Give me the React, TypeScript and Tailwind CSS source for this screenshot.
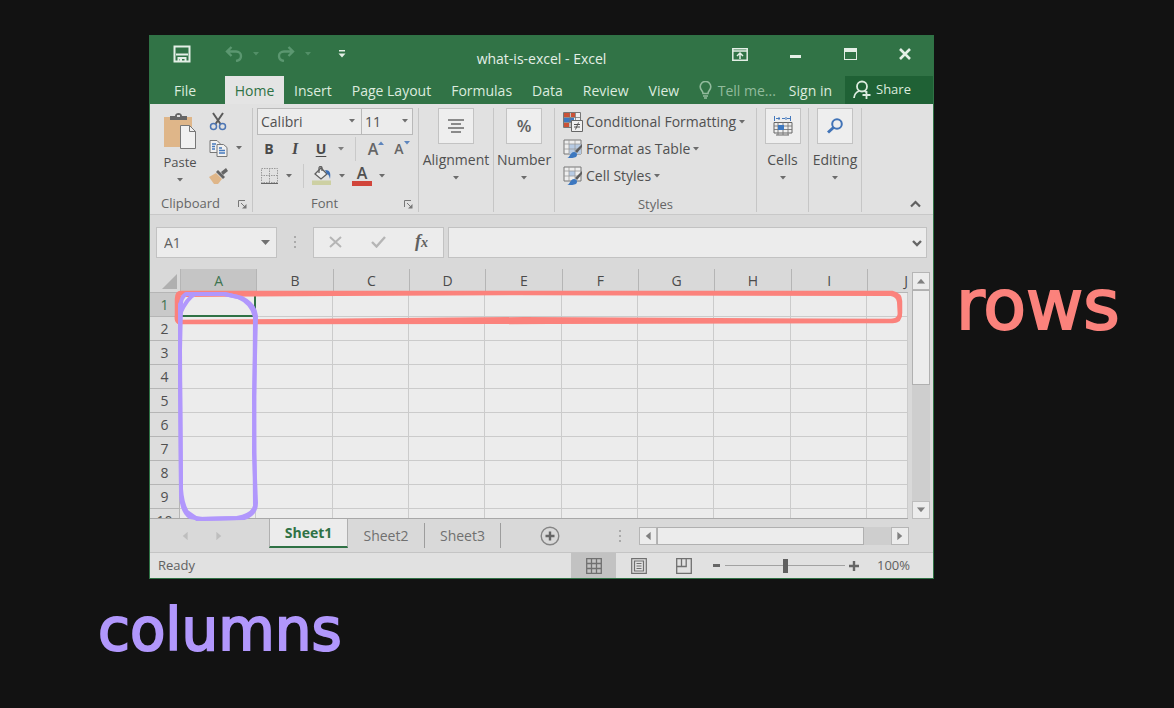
import type { ReactNode } from "react";

const tabs = ["Insert", "Page Layout", "Formulas", "Data", "Review", "View"];
const columns = ["A", "B", "C", "D", "E", "F", "G", "H", "I", "J"];
const rows = [1, 2, 3, 4, 5, 6, 7, 8, 9, 10];

function Caret({ className = "" }: { className?: string }) {
  return (
    <svg className={"shrink-0 opacity-80 " + className} width="6" height="4" viewBox="0 0 6 4" fill="currentColor" aria-hidden="true">
      <path d="M0 0h6L3 3.6z" />
    </svg>
  );
}

function IconButton({ label, className = "", children }: { label: string; className?: string; children: ReactNode }) {
  return (
    <button type="button" aria-label={label} className={"flex shrink-0 items-center justify-center " + className}>
      {children}
    </button>
  );
}

function Launcher({ label }: { label: string }) {
  return (
    <IconButton label={label} className="h-4 w-3 text-[#777]">
      <svg width="9" height="9" viewBox="0 0 9 9" fill="none" stroke="currentColor">
        <path d="M.5 7V.5H7M3 3l4.5 4.5" />
        <path d="M8.5 4v4.5H4z" fill="currentColor" stroke="none" />
      </svg>
    </IconButton>
  );
}

function TitleBar() {
  return (
    <div className="grid h-10 grid-cols-[1fr_auto_1fr] items-center text-[#e4efe6]">
      <div className="flex items-center pb-1 pl-5">
        <IconButton label="Save" className="h-6 w-6">
          <svg width="18" height="18" viewBox="0 0 18 18" fill="none" stroke="currentColor" strokeWidth="2">
            <path d="M1.500 1.500h15v15h-15zM3 9.500h12" />
            <path d="M5.500 17v-4h7v4" />
            <path d="M8 14v3" />
          </svg>
        </IconButton>
        <IconButton label="Undo" className="ml-7 h-6 w-6 text-[#5b9770]">
          <svg width="18" height="16" viewBox="0 0 18 16" fill="none" stroke="currentColor" strokeWidth="2.400">
            <path d="M6.500 1 2 5.500l4.500 4.500M2.500 5.500H11c3 0 5 2 5 4.500s-2 4.500-5 5" />
          </svg>
        </IconButton>
        <IconButton label="Undo options" className="ml-1 h-6 w-3 text-[#5b9770]">
          <Caret />
        </IconButton>
        <IconButton label="Redo" className="ml-3 h-6 w-6 text-[#5b9770]">
          <svg width="18" height="16" viewBox="0 0 18 16" fill="none" stroke="currentColor" strokeWidth="2.400">
            <path d="M11.500 1 16 5.500 11.500 10M15.500 5.500H7c-3 0-5 2-5 4.500s2 4.500 5 5" />
          </svg>
        </IconButton>
        <IconButton label="Redo options" className="ml-1 h-6 w-3 text-[#5b9770]">
          <Caret />
        </IconButton>
        <IconButton label="Customize toolbar" className="ml-5 h-6 w-4">
          <svg width="8" height="8" viewBox="0 0 8 8" fill="currentColor">
            <path d="M1 0h6v1.500H1zM.5 3.500h7L4 7.500z" />
          </svg>
        </IconButton>
      </div>
      <h1 className="pt-1 text-[14px]">what-is-excel - Excel</h1>
      <div className="flex items-center justify-end gap-[31px] pr-4 pb-1">
        <IconButton label="Ribbon display options" className="h-6 w-6">
          <svg width="16" height="13" viewBox="0 0 16 13" fill="none" stroke="currentColor" strokeWidth="1.500">
            <path d="M.8.8h14.400v11.400H.8zM1 3h14M8 11V5.500M5 8l3-3 3 3" />
          </svg>
        </IconButton>
        <IconButton label="Minimize" className="h-6 w-6">
          <span className="mt-1 h-[3px] w-[11px] bg-current" />
        </IconButton>
        <IconButton label="Maximize" className="h-6 w-6">
          <span className="h-3 w-[13px] border border-t-4 border-current" />
        </IconButton>
        <IconButton label="Close" className="h-6 w-6">
          <svg width="12" height="12" viewBox="0 0 12 12" stroke="currentColor" strokeWidth="2.600">
            <path d="m1 1 10 10M11 1 1 11" />
          </svg>
        </IconButton>
      </div>
    </div>
  );
}

function MenuTabs() {
  return (
    <nav className="flex h-7 text-[14px] text-[#dcebdf]">
      <button type="button" className="ml-[11px] w-12">File</button>
      <button type="button" className="ml-4 w-[59px] bg-[#e4e4e4] text-[#2f7245]">Home</button>
      {tabs.map((tab) => (
        <button key={tab} type="button" className="px-2.5 whitespace-nowrap">
          {tab}
        </button>
      ))}
      <button type="button" className="ml-auto flex items-center gap-1.5 whitespace-nowrap text-[#92bb9d]">
        <svg width="13" height="18" viewBox="0 0 13 18" fill="none" stroke="currentColor" strokeWidth="1.600">
          <path d="M4 12.500C4 10 1.200 9 1.200 5.800a5.300 5.300 0 0 1 10.600 0C11.800 9 9 10 9 12.500zM4 15h5M5 17h3" />
        </svg>
        Tell me...
      </button>
      <button type="button" className="px-[13px] whitespace-nowrap">Sign in</button>
      <button type="button" className="flex w-[88px] items-center gap-1 bg-[#1f6135] pl-2 text-[13px] font-medium">
        <svg width="19" height="20" viewBox="0 0 19 20" fill="none" stroke="currentColor" strokeWidth="1.800">
          <circle cx="9" cy="6.500" r="5" />
          <path d="M1 18c.4-4 2.500-6 5-7M11.500 11l1.500 1M13.500 11v8M9.500 15h8" />
        </svg>
        Share
      </button>
    </nav>
  );
}

function ClipboardGroup() {
  return (
    <section className="mt-1 mb-0.5 flex w-[103px] shrink-0 flex-col border-r border-[#c6c6c6]">
      <div className="flex flex-1">
        <button type="button" className="ml-2.5 flex w-10 flex-col items-center">
          <svg className="mt-1" width="36" height="38" viewBox="0 0 36 38">
            <path d="M2 5h28v30H2z" fill="#dfb689" />
            <path d="M8 8V4h5c0-4 7-4 7 0h5v4z" fill="#666" />
            <path d="M15 3h3v2h-3z" fill="#ddd" />
            <path d="M18.500 13.500h9l6 6v17h-15z" fill="#f1f1f1" stroke="#777" />
            <path d="M27.500 13.500v6h6" fill="none" stroke="#777" />
          </svg>
          <span className="mt-0.5 text-[13px] leading-5">Paste</span>
          <Caret className="mt-1.5" />
        </button>
        <div className="flex flex-col">
          <IconButton label="Cut" className="h-[26px] w-9">
            <svg width="18" height="19" viewBox="0 0 18 19" fill="none" strokeWidth="2">
              <path d="m4 1 7.500 11M14 1 6.500 12" stroke="#5a5a5a" />
              <circle cx="4.500" cy="14.500" r="3" stroke="#4d76b4" strokeWidth="1.500" />
              <circle cx="13.500" cy="14.500" r="3" stroke="#4d76b4" strokeWidth="1.500" />
            </svg>
          </IconButton>
          <div className="flex">
            <IconButton label="Copy" className="h-7 w-9">
              <svg width="19" height="17" viewBox="0 0 19 17" fill="#f1f1f1" stroke="#777">
                <path d="M1 .5h7l3 3v9H1z" />
                <path d="M8 4.500h6.500l3.500 3v9H8z" />
                <path d="M3 4h4M3 6.500h3M3 9h3M10 8h3M10 10.500h6M10 13h6" stroke="#4579bd" strokeWidth="1.300" />
              </svg>
            </IconButton>
            <IconButton label="Copy options" className="h-7 w-1.5">
              <Caret />
            </IconButton>
          </div>
          <IconButton label="Format painter" className="h-7 w-9">
            <svg width="19" height="17" viewBox="0 0 19 17">
              <path d="M0 9 7 5l6 6-4 5H5z" fill="#dfb689" />
              <path d="m7 4 2-2 7 7-2 2z" fill="#656565" />
              <path d="m12 4 5-4 2 3-5 4z" fill="#656565" />
            </svg>
          </IconButton>
        </div>
      </div>
      <div className="flex h-4 items-center justify-between pr-1 pl-[11px] text-[13px] text-[#666]">
        Clipboard
        <Launcher label="Clipboard settings" />
      </div>
    </section>
  );
}

function FontGroup() {
  return (
    <section className="mt-1 mb-0.5 flex w-[166px] shrink-0 flex-col border-r border-[#c6c6c6] pl-1">
      <div className="flex h-[27px] w-[156px] border border-[#b9b9b9] bg-[#ececec]">
        <label className="relative w-[104px] border-r border-[#b9b9b9]">
          <select aria-label="Font name" className="h-full w-full appearance-none pl-[3px] outline-none">
            <option>Calibri</option>
          </select>
          <Caret className="pointer-events-none absolute top-2.5 right-1.5" />
        </label>
        <label className="relative flex-1">
          <select aria-label="Font size" className="h-full w-full appearance-none pl-[3px] outline-none">
            <option>11</option>
          </select>
          <Caret className="pointer-events-none absolute top-2.5 right-1" />
        </label>
      </div>
      <div className="flex h-[27px] items-center font-bold text-[#4a4a4a]">
        <button type="button" className="w-6">B</button>
        <button type="button" className="w-7 font-['Liberation_Serif'] text-[16px] italic">I</button>
        <button type="button" className="w-6 underline underline-offset-2">U</button>
        <IconButton label="Underline options" className="h-6 w-4 text-[#666]"><Caret /></IconButton>
        <span className="ml-1.5 h-6 w-px bg-[#c9c9c9]" />
        <IconButton label="Increase font size" className="ml-1.5 h-6 w-7 text-[16px] font-semibold text-[#666]">
          A
          <Caret className="mb-3 rotate-180 text-[#3d6fb5]" />
        </IconButton>
        <IconButton label="Decrease font size" className="h-6 w-6 font-semibold text-[#666]">
          A
          <Caret className="mb-3 text-[#3d6fb5]" />
        </IconButton>
      </div>
      <div className="flex h-[27px] items-center">
        <IconButton label="Borders" className="h-6 w-6">
          <svg width="17" height="16" viewBox="0 0 17 16" fill="none" stroke="#999">
            <path d="M.5.5h16v14H.5zM8.500 0v15M0 7.500h17" strokeDasharray="1.500 1" />
            <path d="M0 15.500h17" stroke="#666" />
          </svg>
        </IconButton>
        <IconButton label="Border options" className="h-6 w-4"><Caret /></IconButton>
        <span className="mx-1.5 h-6 w-px bg-[#c9c9c9]" />
        <IconButton label="Fill color" className="h-6 w-6">
          <svg width="20" height="19" viewBox="0 0 20 19">
            <path d="M0 14.500h19V19H0z" fill="#cdd0a3" />
            <path d="m3 8 6-6 6 6-6 5z" fill="#eee" stroke="#606060" strokeWidth="1.300" />
            <path d="M7 7V2c0-2 3-2 3 0v3" fill="none" stroke="#606060" strokeWidth="1.300" />
            <path d="M13 4c5 0 6 3 5 9-1-4-2-5-3-5z" fill="#3d6fb5" />
          </svg>
        </IconButton>
        <IconButton label="Fill color options" className="h-6 w-4"><Caret /></IconButton>
        <IconButton label="Font color" className="h-6 w-6">
          <span className="w-5 border-b-5 border-[#d1453b] text-center text-[16px] leading-[15px] font-semibold">A</span>
        </IconButton>
        <IconButton label="Font color options" className="h-6 w-4"><Caret /></IconButton>
      </div>
      <div className="mt-auto flex h-4 items-center justify-between pr-1 text-[13px] text-[#666]">
        <span className="flex-1 pr-2.5 text-center">Font</span>
        <Launcher label="Font settings" />
      </div>
    </section>
  );
}

function LargeGroup({ label, className, children }: { label: string; className: string; children: ReactNode }) {
  return (
    <section className={"mt-1 mb-0.5 shrink-0 border-r border-[#c6c6c6] " + className}>
      <button type="button" className="flex w-full flex-col items-center">
        <span className="flex h-9 w-9 items-center justify-center border border-[#c3c3c3] bg-[#eeeeee]">{children}</span>
        <span className="mt-1.5 leading-5">{label}</span>
        <Caret className="mt-1.5" />
      </button>
    </section>
  );
}

function TableBrush({ filled }: { filled: string }) {
  return (
    <svg width="20" height="20" viewBox="0 0 20 20" fill="none">
      <path d="M1 1h17v14H1z" fill="#eee" stroke="#777" />
      <path d={filled} fill="#b7cbe4" />
      <path d="M1 5h17M1 10h17M6 1v14M12 1v14" stroke="#999" strokeWidth=".8" />
      <path d="m19 5-7 7 2 2 5-6z" fill="#5e5e5e" />
      <path d="M4 19c3 0 3-6 7-6 3 0 4 3 2 5-2 1-5 1-9 1z" fill="#3d78c0" />
    </svg>
  );
}

function StylesGroup() {
  return (
    <section className="mt-1 mb-0.5 flex w-[202px] shrink-0 flex-col border-r border-[#c6c6c6] pl-2">
      <button type="button" className="flex h-[27px] items-center gap-[3px] whitespace-nowrap">
        <svg width="20" height="20" viewBox="0 0 20 20">
          <path d="M.5.5h17v15H.5z" fill="#eee" stroke="#777" />
          <path d="M1 1h6v4H1zM8 1h4v4H8zM1 11h5v4H1z" fill="#ca5237" />
          <path d="M1 6h10v4H1z" fill="#3d78c0" />
          <path d="M1 5.500h17M1 10.500h17M7 1v15M12.500 1v8" stroke="#777" fill="none" strokeWidth=".8" />
          <path d="M8.500 8.500h11v11h-11z" fill="#f0f0f0" stroke="#666" />
          <path d="M11 12.500h6M11 15h6M15.500 10.500l-3 7" stroke="#555" fill="none" />
        </svg>
        Conditional Formatting
        <Caret />
      </button>
      <button type="button" className="flex h-[27px] items-center gap-[3px] whitespace-nowrap">
        <TableBrush filled="M6 5h12v10H6z" />
        Format as Table
        <Caret />
      </button>
      <button type="button" className="flex h-[27px] items-center gap-[3px] whitespace-nowrap">
        <TableBrush filled="M6 5h6v5H6z" />
        Cell Styles
        <Caret />
      </button>
      <div className="mt-auto h-4 pr-2 text-center text-[13px] leading-4 text-[#666]">Styles</div>
    </section>
  );
}

function Ribbon() {
  return (
    <div className="flex h-[111px] border-b border-[#c8c8c8] bg-[#e1e1e1] text-[14px] text-[#505050]">
      <ClipboardGroup />
      <FontGroup />
      <LargeGroup label="Alignment" className="w-[75px]">
        <svg width="18" height="14" viewBox="0 0 18 14" stroke="#6a6a6a" strokeWidth="1.500">
          <path d="M1 1h16M4 5h10M1 9h16M4 13h10" />
        </svg>
      </LargeGroup>
      <LargeGroup label="Number" className="w-[61px]">
        <span className="text-[17px] font-semibold text-[#606060]">%</span>
      </LargeGroup>
      <StylesGroup />
      <LargeGroup label="Cells" className="w-[52px]">
        <svg width="20" height="21" viewBox="0 0 20 21" fill="none">
          <path d="M1.500 0v5M17.500 0v5M3 2.500h4M9 2.500h3M14 2.500h3M6 1v3M13 1v3" stroke="#4579bd" />
          <path d="M1 6.500h18v10.500H1zM3 19h13" fill="#eee" stroke="#666" />
          <path d="M1 10h18M1 13.500h18M5 6v13M10 6v13M15 6v13" stroke="#777" strokeWidth=".9" />
          <path d="M5 9h6v5H5z" fill="#3d78c0" />
        </svg>
      </LargeGroup>
      <LargeGroup label="Editing" className="w-[53px]">
        <svg width="18" height="16" viewBox="0 0 18 16" fill="none" stroke="#4173b7" strokeWidth="2">
          <circle cx="11" cy="6" r="4.800" />
          <path d="M7.500 9.500 2 14.500" strokeWidth="3" />
        </svg>
      </LargeGroup>
      <div className="flex flex-1 items-end justify-end pr-2.5">
        <IconButton label="Collapse ribbon" className="h-5 w-4">
          <svg width="11" height="8" viewBox="0 0 11 8" fill="none" stroke="#606060" strokeWidth="2.200">
            <path d="m1 6.500 4.500-4.500L10 6.500" />
          </svg>
        </IconButton>
      </div>
    </div>
  );
}

function MoreDots() {
  return (
    <span className="flex flex-col gap-[3px]">
      <i className="size-0.5 bg-[#aaa]" />
      <i className="size-0.5 bg-[#aaa]" />
      <i className="size-0.5 bg-[#aaa]" />
    </span>
  );
}

function FormulaBar() {
  return (
    <div className="flex h-[54px] items-center px-1.5 text-[14px] text-[#606060]">
      <label className="relative h-[31px] w-[121px] shrink-0 border border-[#c2c2c2] bg-[#ececec]">
        <input aria-label="Name box" defaultValue="A1" className="h-full w-full bg-transparent px-[7px] outline-none" />
        <svg className="absolute top-3 right-1.5" width="9" height="5" viewBox="0 0 9 5" fill="#707070">
          <path d="M0 0h9L4.500 5z" />
        </svg>
      </label>
      <span className="flex w-9 shrink-0 justify-center">
        <MoreDots />
      </span>
      <div className="flex h-[31px] w-[131px] shrink-0 items-center justify-around border border-[#c2c2c2] bg-[#ececec]">
        <IconButton label="Cancel" className="h-6 w-8">
          <svg width="13" height="12" viewBox="0 0 13 12" stroke="#b5b5b5" strokeWidth="2">
            <path d="m1 1 11 10M12 1 1 11" />
          </svg>
        </IconButton>
        <IconButton label="Enter" className="h-6 w-8">
          <svg width="15" height="12" viewBox="0 0 15 12" fill="none" stroke="#b5b5b5" strokeWidth="2.400">
            <path d="m1 6 4.500 4.500L14 1" />
          </svg>
        </IconButton>
        <button type="button" aria-label="Insert function" className="w-8 font-['Liberation_Serif'] text-[18px] leading-5 font-bold italic">
          f<span className="text-[14px]">x</span>
        </button>
      </div>
      <label className="relative ml-1 h-[31px] flex-1 border border-[#c2c2c2] bg-[#ececec]">
        <input aria-label="Formula" className="h-full w-full bg-transparent px-2 outline-none" />
        <svg className="absolute top-3 right-1" width="10" height="7" viewBox="0 0 10 7" fill="none" stroke="#666" strokeWidth="2.400">
          <path d="m1 1 4 4 4-4" />
        </svg>
      </label>
    </div>
  );
}

function Grid() {
  return (
    <div className="min-w-0 flex-1 overflow-hidden border-b border-[#a8a8a8]">
      <table className="w-full table-fixed border-separate border-spacing-0 text-[14px] leading-5">
        <colgroup>
          <col className="w-[30px]" />
          {columns.map((column) => (
            <col key={column} className={column === "J" ? "w-[41px]" : ""} />
          ))}
        </colgroup>
        <thead>
          <tr className="h-6 text-[#4b4b4b]">
            <th className="border-b border-[#b5b5b5] p-0">
              <svg className="mt-0.5 ml-3" width="15" height="15" viewBox="0 0 15 15" fill="#b0b0b0">
                <path d="M15 0v15H0z" />
              </svg>
            </th>
            {columns.map((column) => (
              <th
                key={column}
                scope="col"
                className={
                  "border-b border-l border-[#b5b5b5] p-0 font-medium " +
                  (column === "A" ? "bg-[#c5c5c5] text-[#3e7450]" : column === "J" ? "text-right" : "")
                }
              >
                {column}
              </th>
            ))}
          </tr>
        </thead>
        <tbody>
          {rows.map((row) => (
            <tr key={row} className="h-6">
              <th
                scope="row"
                className={
                  "border-r border-b border-[#b5b5b5] p-0 font-medium " +
                  (row === 1 ? "bg-[#c9c9c9] text-[#3e7450]" : "bg-[#dddddd] text-[#505050]")
                }
              >
                {row}
              </th>
              {columns.map((column) => (
                <td
                  key={column}
                  className={
                    row === 1 && column === "A"
                      ? "border-r-2 border-b-2 border-[#2f7245] bg-[#ececec]"
                      : "border-r border-b border-[#cbcbcb] bg-[#ececec]"
                  }
                />
              ))}
            </tr>
          ))}
        </tbody>
      </table>
    </div>
  );
}

function VerticalScroll() {
  return (
    <div className="mr-[3px] ml-1 mt-[3px] flex w-[18px] flex-col bg-[#cecece] text-[#666]">
      <IconButton label="Scroll up" className="h-[18px] border border-[#b5b5b5] bg-[#ececec]">
        <Caret className="rotate-180 scale-140" />
      </IconButton>
      <div className="h-[95px] border border-[#b0b0b0] bg-[#ececec]" />
      <IconButton label="Scroll down" className="mt-auto h-[18px] border border-[#bdbdbd] bg-[#ececec]">
        <Caret className="scale-140" />
      </IconButton>
    </div>
  );
}

// Hand-drawn outlines laid over the first row and the first column.
function Outlines() {
  return (
    <>
      <svg
        className="pointer-events-none absolute top-5 left-[23px] h-9 w-[calc(100%-52px)]"
        viewBox="0 0 729 36"
        preserveAspectRatio="none"
        fill="none"
        stroke="#fb827c"
        strokeLinecap="round"
        strokeLinejoin="round"
      >
        <path d="M7 4C180 3 430 5 717 4q8 2 8 8v12q0 8-7 8C500 33 220 33 7 33q-4 0-3-7V10q0-6 4-6" strokeWidth="4.500" />
        <path d="M10 6 340 4 716 5q7 1 8 8l1 13q-2 6-9 6L350 30 6 33Q5 20 6 7" strokeWidth="4" />
      </svg>
      <svg
        className="pointer-events-none absolute top-[21px] left-[27px]"
        width="83"
        height="234"
        viewBox="0 0 83 234"
        fill="none"
        stroke="#b197fc"
        strokeLinecap="round"
        strokeLinejoin="round"
      >
        <path d="M9 4Q3 8 4 18L3 60l1 145q1 17 9 22l12 2 42-1q12-4 12-15l-2-50 1-136q-3-14-17-20L47 4z" strokeWidth="4" />
        <path d="M3 24Q10 8 18 4h30l17 4q13 7 14 18l-2 80 1 110q-2 9-18 12l-40 1-10-7Q5 214 4 199L3 90V14" strokeWidth="4" />
      </svg>
    </>
  );
}

function SheetBar() {
  return (
    <div className="flex h-[33px] text-[14px] text-[#707070]">
      <div className="flex w-[119px] shrink-0 items-center pl-[31px] text-[#b8b8b8]">
        <IconButton label="Previous sheet" className="h-6 w-2"><Caret className="rotate-90 scale-140" /></IconButton>
        <IconButton label="Next sheet" className="ml-[26px] h-6 w-2"><Caret className="-rotate-90 scale-140" /></IconButton>
      </div>
      <button type="button" className="mb-1 w-[79px] border-x border-b-2 border-x-[#b0b0b0] border-b-[#2f7245] bg-[#ececec] font-bold text-[#2f7245]">
        Sheet1
      </button>
      <button type="button" className="my-1 w-[77px] border-r border-[#9d9d9d]">Sheet2</button>
      <button type="button" className="my-1 w-[76px] border-r border-[#9d9d9d]">Sheet3</button>
      <IconButton label="New sheet" className="ml-[37px] w-6">
        <svg width="20" height="20" viewBox="0 0 20 20" fill="none" stroke="#858585" strokeWidth="1.400">
          <circle cx="10" cy="10" r="8.800" />
          <path d="M10 5.500v9M5.500 10h9" stroke="#666" strokeWidth="2.400" />
        </svg>
      </IconButton>
      <div className="ml-auto flex items-center pr-6">
        <MoreDots />
        <div className="ml-[18px] flex h-[18px] w-[270px] bg-[#cecece] text-[#666]">
          <IconButton label="Scroll left" className="w-[18px] border border-[#b5b5b5] bg-[#ececec]">
            <Caret className="rotate-90 scale-140" />
          </IconButton>
          <div className="flex-1 border border-[#b0b0b0] bg-[#ececec]" />
          <IconButton label="Scroll right" className="ml-[27px] w-[18px] border border-[#b5b5b5] bg-[#ececec]">
            <Caret className="-rotate-90 scale-140" />
          </IconButton>
        </div>
      </div>
    </div>
  );
}

function StatusBar() {
  return (
    <div className="flex h-[26px] items-center border-t border-[#c4c4c4] bg-[#e1e1e1] text-[13px] text-[#606060]">
      <span className="pl-2">Ready</span>
      <div className="ml-auto flex h-full">
        <IconButton label="Normal view" className="w-[45px] bg-[#c2c2c2]">
          <svg width="16" height="16" viewBox="0 0 16 16" fill="none" stroke="#707070" strokeWidth="1.300">
            <path d="M.7.700h14.600v14.600H.7zM5.500.7v14.600M10.500.7v14.600M.7 5.500h14.600M.7 10.500h14.600" />
          </svg>
        </IconButton>
        <IconButton label="Page layout view" className="w-[45px]">
          <svg width="16" height="16" viewBox="0 0 16 16" fill="none" stroke="#707070" strokeWidth="1.200">
            <path d="M.7.700h14.600v14.600H.7zM3.500 3h9v10h-9zM5.500 5.500h5M5.500 8h5M5.500 10.500h5" />
          </svg>
        </IconButton>
        <IconButton label="Page break preview" className="w-[45px]">
          <svg width="16" height="16" viewBox="0 0 16 16" fill="none" stroke="#707070" strokeWidth="1.300">
            <path d="M.7.700h14.600v14.600H.7zM.7 8.500h9.500V.7M5.500.7v7.800" />
          </svg>
        </IconButton>
      </div>
      <IconButton label="Zoom out" className="ml-0.5 h-5 w-4"><i className="h-[3px] w-[7px] bg-[#666]" /></IconButton>
      <input
        type="range"
        aria-label="Zoom"
        defaultValue={50}
        className="mx-px h-4 w-[120px] appearance-none bg-[linear-gradient(#a2a2a2,#a2a2a2)] bg-size-[100%_1px] bg-center bg-no-repeat [&::-webkit-slider-thumb]:h-3.5 [&::-webkit-slider-thumb]:w-[5px] [&::-webkit-slider-thumb]:appearance-none [&::-webkit-slider-thumb]:bg-[#606060]"
      />
      <IconButton label="Zoom in" className="h-5 w-4">
        <svg width="10" height="10" viewBox="0 0 10 10" stroke="#666" strokeWidth="2.400"><path d="M5 0v10M0 5h10" /></svg>
      </IconButton>
      <span className="w-[71px] pl-[15px]">100%</span>
    </div>
  );
}

export default function App() {
  return (
    <main className="grid min-h-screen grid-cols-[149px_minmax(0,1fr)_240px] grid-rows-[auto_1fr] bg-[#121212] pt-[35px] font-['Open_Sans',sans-serif]">
      <div className="col-start-2 border border-[#2f7245] bg-[#d9d9d9]">
        <header className="bg-[#317346]">
          <TitleBar />
          <MenuTabs />
        </header>
        <Ribbon />
        <FormulaBar />
        <div className="relative flex h-[250px]">
          <Grid />
          <VerticalScroll />
          <Outlines />
        </div>
        <SheetBar />
        <StatusBar />
      </div>
      <p className="mt-[230px] pl-[22px] font-['DejaVu_Sans',sans-serif] text-[70px] leading-[80px] text-[#fb827c] [-webkit-text-stroke:2px_#fb827c]">
        rows
      </p>
      <p className="col-span-3 mt-4 pl-[98px] font-['DejaVu_Sans',sans-serif] text-[58px] leading-[70px] text-[#b197fc] [-webkit-text-stroke:2px_#b197fc]">
        columns
      </p>
    </main>
  );
}
